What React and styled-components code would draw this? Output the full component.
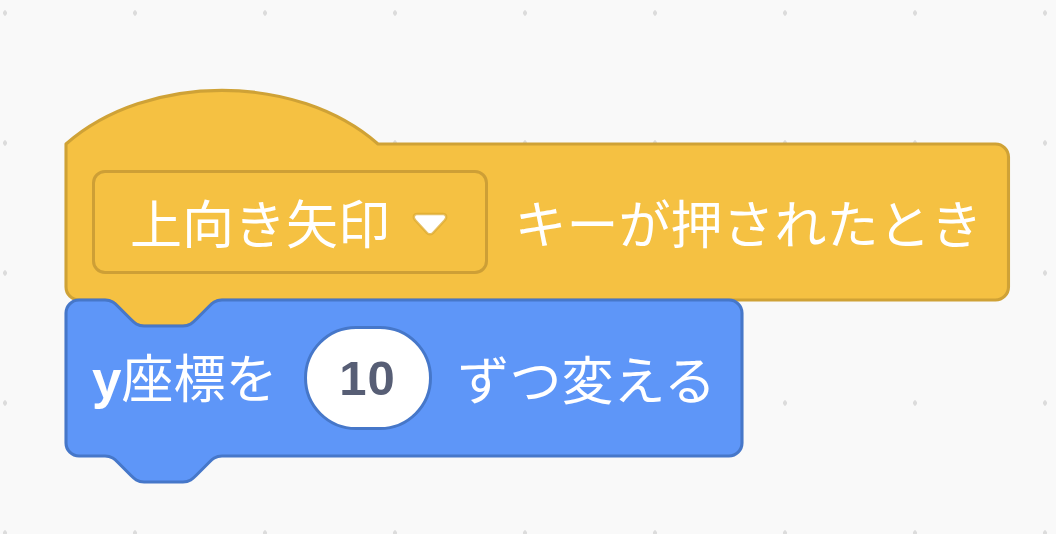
import React from "react";
import styled, { createGlobalStyle } from "styled-components";

// scratch block unit -> px
const U = 3.25;

const GlobalStyle = createGlobalStyle`
  html, body {
    margin: 0;
    padding: 0;
    width: 100%;
    height: 100%;
    overflow: hidden;
  }
  body {
    background-color: #f9f9f9;
    background-image: radial-gradient(ellipse 2px 3px at center, #dcdcdc 80%, transparent 100%);
    background-size: 130px 130px;
    background-position: -60px -52px;
    font-family: "Noto Sans CJK JP", "Liberation Sans", sans-serif;
  }
`;

const Workspace = styled.div`
  width: 1056px;
  height: 534px;
  padding: 144px 0 0 66px;
  box-sizing: border-box;
`;

const Script = styled.div`
  display: flex;
  flex-direction: column;
  align-items: flex-start;
`;

const Block = styled.div`
  position: relative;
  width: ${(p) => p.$units * U}px;
  height: ${48 * U}px;
`;

const Shape = styled.svg`
  position: absolute;
  left: 0;
  top: 0;
  width: 100%;
  height: 100%;
  overflow: visible;

  path {
    fill: ${(p) => p.$fill};
    stroke: ${(p) => p.$stroke};
    stroke-width: 0.95;
    stroke-linejoin: round;
  }
`;

const Row = styled.div`
  position: relative;
  height: 100%;
  box-sizing: border-box;
  display: flex;
  align-items: center;
  gap: 26px;
  padding: 0 26px;
`;

const Label = styled.span`
  color: #fff;
  font-size: 52px;
  line-height: 1;
  font-weight: 400;
  white-space: nowrap;
`;

const Latin = styled.span`
  font-family: "Liberation Sans", sans-serif;
  font-weight: 700;
  font-size: 53px;
`;

const Dropdown = styled.div`
  width: 397px;
  height: 104px;
  box-sizing: border-box;
  display: flex;
  align-items: center;
  padding: 0 36px 0 35px;
  border: 3px solid #cd9f36;
  border-radius: 13px;
  background: #f5c142;
`;

const Caret = styled.svg`
  margin-left: auto;
  width: 38px;
  height: 27px;
  margin-top: 4px;
`;

const NumberInput = styled.div`
  width: 130px;
  height: 104px;
  box-sizing: border-box;
  display: flex;
  align-items: center;
  justify-content: center;
  border: 3px solid #4677c9;
  border-radius: 52px;
  background: #fff;
  color: #575e75;
  font-family: "Liberation Sans", sans-serif;
  font-weight: 700;
  font-size: 49px;
  letter-spacing: 1px;
  line-height: 1;
`;

const tab =
  "c -2,0 -3,1 -4,2 l -4,4 c -1,1 -2,2 -4,2 h -12 c -2,0 -3,-1 -4,-2 l -4,-4 c -1,-1 -2,-2 -4,-2";
const notch =
  "c 2,0 3,1 4,2 l 4,4 c 1,1 2,2 4,2 h 12 c 2,0 3,-1 4,-2 l 4,-4 c 1,-1 2,-2 4,-2";

const hatPath = (w) =>
  `M 0,0 c 25,-22 71,-22 96,0 H ${w - 4} a 4,4 0 0,1 4,4 V 44 a 4,4 0 0,1 -4,4 H 48 ${tab} H 4 a 4,4 0 0,1 -4,-4 z`;

const stackPath = (w) =>
  `M 0,4 a 4,4 0 0,1 4,-4 H 12 ${notch} H ${w - 4} a 4,4 0 0,1 4,4 V 44 a 4,4 0 0,1 -4,4 H 48 ${tab} H 4 a 4,4 0 0,1 -4,-4 z`;

const DropdownArrow = () => (
  <Caret viewBox="0 0 38 27">
    <path
      d="M 6,3 H 32 C 35,3 36.5,6.5 34,9 L 22,22 C 20.5,23.8 17.5,23.8 16,22 L 4,9 C 1.5,6.5 3,3 6,3 Z"
      fill="#fff"
      stroke="#dca92f"
      strokeOpacity="0.75"
      strokeWidth="2.5"
      strokeLinejoin="round"
    />
  </Caret>
);

export default function App() {
  const hatW = 290;
  const stackW = 208;
  return (
    <>
      <GlobalStyle />
      <Workspace>
        <Script>
          <Block $units={hatW}>
            <Shape viewBox={`0 0 ${hatW} 48`} $fill="#f5c142" $stroke="#cfa236">
              <path d={hatPath(hatW)} />
            </Shape>
            <Row>
              <Dropdown>
                <Label>上向き矢印</Label>
                <DropdownArrow />
              </Dropdown>
              <Label>キーが押されたとき</Label>
            </Row>
          </Block>
          <Block $units={stackW}>
            <Shape viewBox={`0 0 ${stackW} 48`} $fill="#5e96f8" $stroke="#4677c9">
              <path d={stackPath(stackW)} />
            </Shape>
            <Row>
              <Label>
                <Latin>y</Latin>座標を
              </Label>
              <NumberInput>10</NumberInput>
              <Label>ずつ変える</Label>
            </Row>
          </Block>
        </Script>
      </Workspace>
    </>
  );
}
